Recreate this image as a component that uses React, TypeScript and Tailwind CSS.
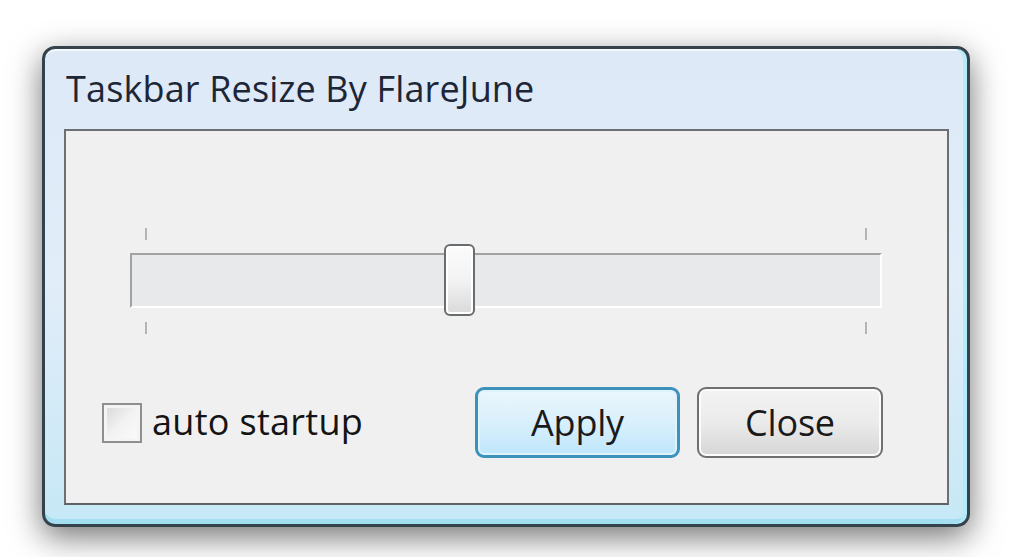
import React from 'react';

const font = { fontFamily: '"Open Sans", "Noto Sans", sans-serif' };

function Tick() {
  return <div className="w-[2px] h-[12px] bg-[#b4b4b4]" />;
}

export default function App() {
  return (
    <div className="w-[1020px] h-[557px] bg-white pt-[46px] pl-[42px] overflow-hidden">
      {/* window */}
      <div className="w-[928px] h-[481px] rounded-[13px] border-[3px] border-[#34424b] bg-gradient-to-b from-[#dde9f6] via-[#e1edf9] to-[#c6e8f6] shadow-[0_10px_32px_rgba(0,0,0,0.55),inset_-4px_0_0_#b3ebfa,inset_0_-5px_0_#a3def1,inset_0_2px_0_#f4f9fd] flex flex-col">
        <div className="h-[80px] flex items-center pl-[21px]">
          <span className="text-[36px] text-[#1c2636] tracking-[0.15px]" style={font}>
            Taskbar Resize By FlareJune
          </span>
        </div>
        <div className="flex-1 ml-[19px] mr-[18px] mb-[19px] border-2 border-[#6c7075] border-b-[#5f6368] bg-[#f0f0f0] flex flex-col">
          {/* slider */}
          <div className="mt-[97px] ml-[64px] w-[752px] flex flex-col">
            <div className="flex justify-between px-[15px]">
              <Tick />
              <Tick />
            </div>
            <div className="relative mt-[13px] h-[55px] bg-[#e8e9ea] border-t-2 border-l-2 border-[#a2a2a2] border-b-2 border-b-white border-r-2 border-r-white">
              <div className="absolute left-[312px] top-[-11px] w-[31px] h-[72px] rounded-[6px] border-2 border-[#6a6d70] bg-gradient-to-b from-[#fbfbfb] via-[#f3f3f3] to-[#d9d9d9] shadow-[inset_0_0_0_2px_#ffffff]" />
            </div>
            <div className="flex justify-between px-[15px] mt-[14px]">
              <Tick />
              <Tick />
            </div>
          </div>
          {/* bottom row */}
          <div className="mt-[53px] flex items-center">
            <div className="ml-[36px] w-[373px] flex items-center">
              <div className="w-[40px] h-[40px] border-2 border-[#8e8f8f] bg-gradient-to-br from-[#d6d6d6] via-[#f2f2f2] to-[#fbfbfb] shadow-[inset_0_0_0_3px_#f4f4f4]" />
              <span className="ml-[10px] text-[36px] text-[#141414] tracking-[0.3px] -mt-[2px]" style={font}>
                auto startup
              </span>
            </div>
            <button className="w-[205px] h-[71px] rounded-[9px] border-[3px] border-[#3c92bb] bg-gradient-to-b from-[#eaf6fd] via-[#d9f0fc] to-[#bee6fb] shadow-[inset_0_0_0_2px_#dff3fd] text-[36px] text-[#1a1a1a] tracking-[-0.2px]" style={font}>
              Apply
            </button>
            <button className="ml-[17px] w-[186px] h-[71px] rounded-[9px] border-2 border-[#707070] bg-gradient-to-b from-[#f3f3f3] via-[#ebebeb] to-[#d6d6d6] shadow-[inset_0_0_0_2px_#fcfcfc] text-[36px] text-[#1a1a1a] tracking-[-0.2px]" style={font}>
              Close
            </button>
          </div>
        </div>
      </div>
    </div>
  );
}
